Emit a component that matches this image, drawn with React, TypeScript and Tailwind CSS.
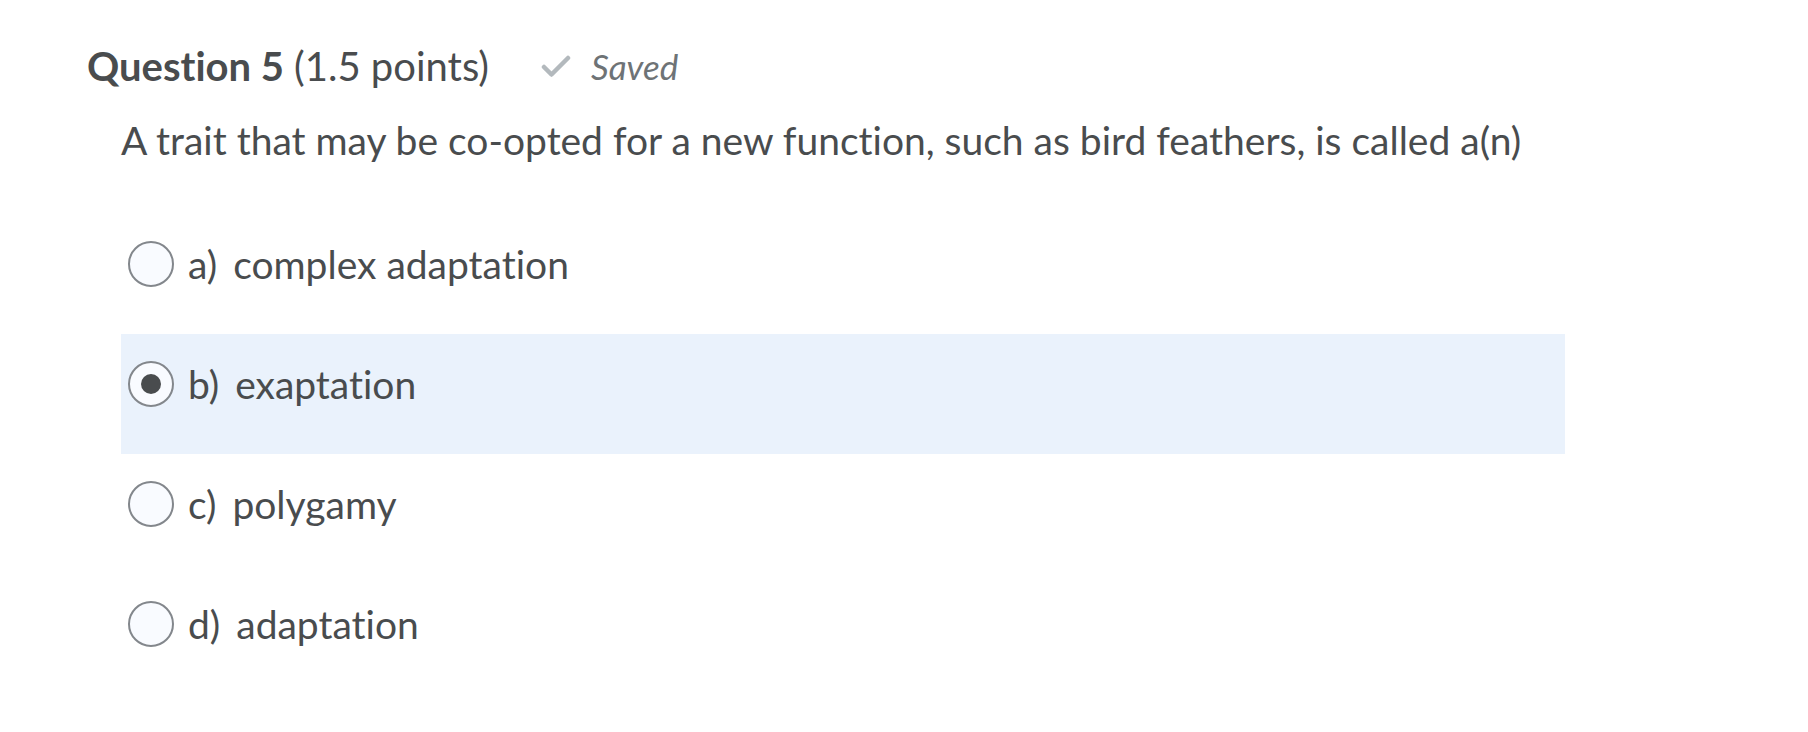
import React from 'react';

const options = [
  { key: 'a)', label: 'complex adaptation' },
  { key: 'b)', label: 'exaptation' },
  { key: 'c)', label: 'polygamy' },
  { key: 'd)', label: 'adaptation' },
];

const Radio = ({ checked }: { checked: boolean }) => (
  <span className="flex h-[46px] w-[46px] shrink-0 items-center justify-center rounded-full border-2 border-[#83878c] bg-[#f9fbff]">
    {checked && <span className="h-[20px] w-[20px] rounded-full bg-[#494c4e]" />}
  </span>
);

export default function App() {
  const selected = 1;

  return (
    <div className="min-h-screen bg-white font-['Lato','Noto_Sans',sans-serif] text-[#494c4e] [font-variant-ligatures:none]">
      <div className="pl-[87px] pt-[42px]">
        {/* header */}
        <div className="flex items-center text-[40px] leading-[48px]">
          <span className="font-bold">Question 5</span>
          <span className="ml-[10px]">(1.5 points)</span>
          <span className="ml-[52px] flex items-center gap-[20px] text-[#6e7376]">
            <svg width="30" height="22" viewBox="0 0 30 22" fill="none">
              <path d="M3 12l7.5 7.5L27 3" stroke="#b3b9bd" strokeWidth="4.5" strokeLinecap="round" strokeLinejoin="round" />
            </svg>
            <span className="text-[35px] italic">Saved</span>
          </span>
        </div>

        <div className="pl-[34px]">
          <p className="mt-[26px] text-[39px] leading-[48px]">
            A trait that may be co-opted for a new function, such as bird feathers, is called a(n)
          </p>

          <div className="mt-[50px] w-[1444px]">
            {options.map((o, i) => (
              <label
                key={o.key}
                className={`flex h-[120px] items-start gap-[14px] px-[7px] pt-[27px] ${
                  i === selected ? 'bg-[#eaf2fc]' : ''
                }`}
              >
                <Radio checked={i === selected} />
                <span className="flex text-[39px] leading-[46px]">
                  <span>{o.key}</span>
                  <span className="ml-[16px]">{o.label}</span>
                </span>
              </label>
            ))}
          </div>
        </div>
      </div>
    </div>
  );
}
